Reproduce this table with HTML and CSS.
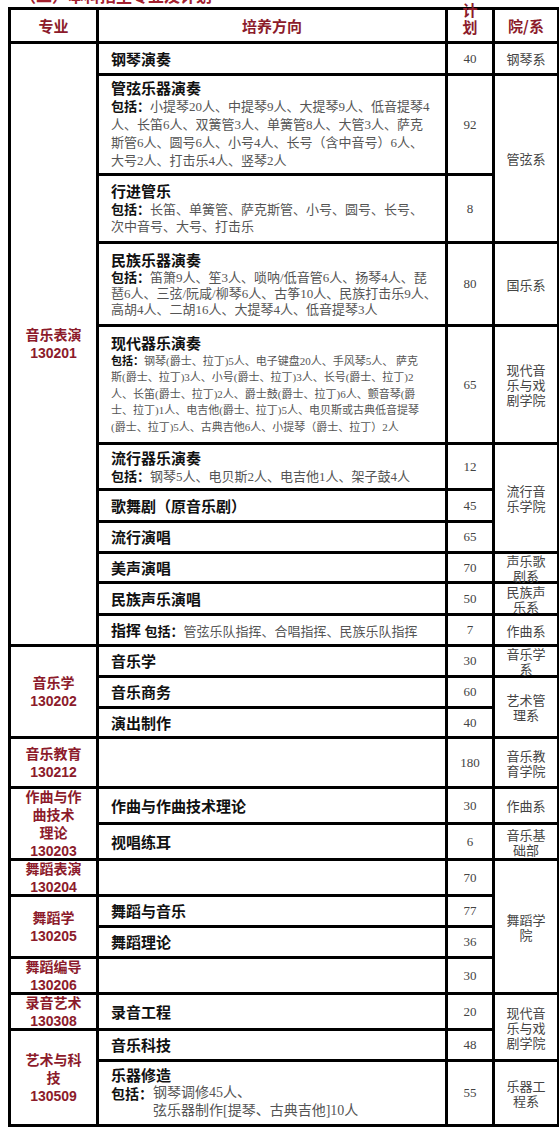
FILE: index.html
```html
<!DOCTYPE html>
<html lang="zh-CN">
<head>
<meta charset="utf-8">
<title>招生专业及计划</title>
<link rel="stylesheet" href="styles.css">
</head>
<body>
<div class="cut"><div class="cut-text">（二）本科招生专业及计划</div></div>
<table class="plan">
  <colgroup>
    <col class="c1"><col class="c2"><col class="c3"><col class="c4">
  </colgroup>
  <tr class="h34 head">
    <th>专业</th>
    <th>培养方向</th>
    <th><div class="jh">计<br>划</div></th>
    <th>院/系</th>
  </tr>
  <tr class="h32">
    <td class="major" rowspan="11"><div class="in">音乐表演<br>130201</div></td>
    <td class="dir"><div class="t">钢琴演奏</div></td>
    <td class="num">40</td>
    <td class="dept"><div class="in">钢琴系</div></td>
  </tr>
  <tr class="h100">
    <td class="dir"><div class="t">管弦乐器演奏</div>
      <div class="d d18"><b>包括：</b>小提琴20人、中提琴9人、大提琴9人、低音提琴4<br>人、长笛6人、双簧管3人、单簧管8人、大管3人、萨克<br>斯管6人、圆号6人、小号4人、长号（含中音号）6人、<br>大号2人、打击乐4人、竖琴2人</div></td>
    <td class="num">92</td>
    <td class="dept" rowspan="2"><div class="in">管弦系</div></td>
  </tr>
  <tr class="h68">
    <td class="dir"><div class="t">行进管乐</div>
      <div class="d"><b>包括：</b>长笛、单簧管、萨克斯管、小号、圆号、长号、<br>次中音号、大号、打击乐</div></td>
    <td class="num">8</td>
  </tr>
  <tr class="h83">
    <td class="dir"><div class="t">民族乐器演奏</div>
      <div class="d d16"><b>包括：</b>笛箫9人、笙3人、唢呐/低音管6人、扬琴4人、琵<br>琶6人、三弦/阮咸/柳琴6人、古筝10人、民族打击乐9人、<br>高胡4人、二胡16人、大提琴4人、低音提琴3人</div></td>
    <td class="num">80</td>
    <td class="dept"><div class="in">国乐系</div></td>
  </tr>
  <tr class="h118">
    <td class="dir"><div class="t">现代器乐演奏</div>
      <div class="d small"><b>包括：</b>钢琴(爵士、拉丁)5人、电子键盘20人、手风琴5人、 萨克<br>斯(爵士、拉丁)3人、小号(爵士、拉丁)3人、长号(爵士、拉丁)2<br>人、长笛(爵士、拉丁)2人、爵士鼓(爵士、拉丁)6人、颤音琴(爵<br>士、拉丁)1人、电吉他(爵士、拉丁)5人、电贝斯或古典低音提琴<br>(爵士、拉丁)5人、古典吉他6人、小提琴（爵士、拉丁）2人</div></td>
    <td class="num">65</td>
    <td class="dept"><div class="in">现代音乐与戏剧学院</div></td>
  </tr>
  <tr class="h46">
    <td class="dir"><div class="t">流行器乐演奏</div>
      <div class="d"><b>包括：</b>钢琴5人、电贝斯2人、电吉他1人、架子鼓4人</div></td>
    <td class="num">12</td>
    <td class="dept" rowspan="3"><div class="in">流行音乐学院</div></td>
  </tr>
  <tr class="h32">
    <td class="dir"><div class="t">歌舞剧（原音乐剧）</div></td>
    <td class="num">45</td>
  </tr>
  <tr class="h31">
    <td class="dir"><div class="t">流行演唱</div></td>
    <td class="num">65</td>
  </tr>
  <tr class="h30">
    <td class="dir"><div class="t">美声演唱</div></td>
    <td class="num">70</td>
    <td class="dept"><div class="in">声乐歌剧系</div></td>
  </tr>
  <tr class="h32">
    <td class="dir"><div class="t">民族声乐演唱</div></td>
    <td class="num">50</td>
    <td class="dept"><div class="in">民族声乐系</div></td>
  </tr>
  <tr class="h31">
    <td class="dir"><div class="t inline">指挥 <span class="d"><b>包括：</b>管弦乐队指挥、合唱指挥、民族乐队指挥</span></div></td>
    <td class="num">7</td>
    <td class="dept"><div class="in">作曲系</div></td>
  </tr>
  <tr class="h31">
    <td class="major" rowspan="3"><div class="in">音乐学<br>130202</div></td>
    <td class="dir"><div class="t">音乐学</div></td>
    <td class="num">30</td>
    <td class="dept"><div class="in">音乐学系</div></td>
  </tr>
  <tr class="h31">
    <td class="dir"><div class="t">音乐商务</div></td>
    <td class="num">60</td>
    <td class="dept" rowspan="2"><div class="in">艺术管理系</div></td>
  </tr>
  <tr class="h30">
    <td class="dir"><div class="t">演出制作</div></td>
    <td class="num">40</td>
  </tr>
  <tr class="h50">
    <td class="major"><div class="in">音乐教育<br>130212</div></td>
    <td class="dir"></td>
    <td class="num">180</td>
    <td class="dept"><div class="in">音乐教育学院</div></td>
  </tr>
  <tr class="h36">
    <td class="major" rowspan="2"><div class="in">作曲与作<br>曲技术<br>理论<br>130203</div></td>
    <td class="dir"><div class="t">作曲与作曲技术理论</div></td>
    <td class="num">30</td>
    <td class="dept"><div class="in">作曲系</div></td>
  </tr>
  <tr class="h36">
    <td class="dir"><div class="t">视唱练耳</div></td>
    <td class="num">6</td>
    <td class="dept"><div class="in">音乐基础部</div></td>
  </tr>
  <tr class="h36">
    <td class="major"><div class="in">舞蹈表演<br>130204</div></td>
    <td class="dir"></td>
    <td class="num">70</td>
    <td class="dept" rowspan="4"><div class="in">舞蹈学院</div></td>
  </tr>
  <tr class="h31">
    <td class="major" rowspan="2"><div class="in">舞蹈学<br>130205</div></td>
    <td class="dir"><div class="t">舞蹈与音乐</div></td>
    <td class="num">77</td>
  </tr>
  <tr class="h31">
    <td class="dir"><div class="t">舞蹈理论</div></td>
    <td class="num">36</td>
  </tr>
  <tr class="h36">
    <td class="major"><div class="in">舞蹈编导<br>130206</div></td>
    <td class="dir"></td>
    <td class="num">30</td>
  </tr>
  <tr class="h36">
    <td class="major"><div class="in">录音艺术<br>130308</div></td>
    <td class="dir"><div class="t">录音工程</div></td>
    <td class="num">20</td>
    <td class="dept" rowspan="2"><div class="in">现代音乐与戏剧学院</div></td>
  </tr>
  <tr class="h31">
    <td class="major" rowspan="2"><div class="in">艺术与科<br>技<br>130509</div></td>
    <td class="dir"><div class="t">音乐科技</div></td>
    <td class="num">48</td>
  </tr>
  <tr class="h65">
    <td class="dir"><div class="t">乐器修造</div>
      <div class="d d18 big indent"><b>包括：</b><span>钢琴调修45人、<br>弦乐器制作[提琴、古典吉他]10人</span></div></td>
    <td class="num">55</td>
    <td class="dept"><div class="in">乐器工程系</div></td>
  </tr>
</table>
</body>
</html>
```

FILE: styles.css
```css
html, body {
  margin: 0;
  padding: 0;
  background: #ffffff;
}

body {
  font-family: "Noto Sans CJK SC", "Noto Sans", sans-serif;
  color: #111;
}

.cut {
  height: 5px;
  overflow: hidden;
  padding-left: 20px;
}

.cut-text {
  margin-top: -13px;
  font: 700 16px/16px "Noto Sans CJK SC", sans-serif;
  color: #a3202e;
}

.plan {
  border-collapse: collapse;
  table-layout: fixed;
  width: 549px;
  margin: 2px 0 0 8px;
}

.c1 { width: 88px; }
.c2 { width: 349px; }
.c3 { width: 47px; }
.c4 { width: 65px; }

.plan th,
.plan td {
  border: 3px solid #000;
  padding: 0;
  vertical-align: middle;
}

.plan .head th {
  color: #8c1b2b;
  font: 700 15px/18px "Noto Sans CJK SC", sans-serif;
  text-align: center;
}

.jh {
  margin-top: -15px;
  line-height: 17px;
}

.h30 { height: 30px; }
.h31 { height: 31px; }
.h32 { height: 32px; }
.h34 { height: 34px; }
.h36 { height: 36px; }
.h46 { height: 46px; }
.h50 { height: 50px; }
.h65 { height: 65px; }
.h68 { height: 68px; }
.h83 { height: 83px; }
.h100 { height: 100px; }
.h118 { height: 118px; }

.plan .major {
  color: #8c1b2b;
  font: 700 14px/18px "Liberation Sans", "Noto Sans CJK SC", sans-serif;
  text-align: center;
  padding: 0 4px;
}

.in {
  margin: -3px 0;
}

.plan .dir {
  padding: 0 6px 0 12px;
}

.t {
  font: 700 15px/18px "Noto Sans CJK SC", sans-serif;
  color: #111;
  white-space: nowrap;
}

.t.inline .d {
  font-size: 13px;
  font-weight: 400;
}

.d {
  font: 400 13px/17px "Liberation Serif", "Noto Sans CJK SC", serif;
  color: #555;
  white-space: nowrap;
}

.d b {
  font-family: "Noto Sans CJK SC", sans-serif;
  font-weight: 700;
  color: #111;
}

.d16 { line-height: 16px; }
.d18 { line-height: 18px; }

.d.small {
  font-size: 11px;
  line-height: 16.5px;
}

.d.big {
  font-size: 14px;
}

.indent {
  display: flex;
  align-items: flex-start;
}

.indent b {
  font-size: 14px;
  flex: none;
}

.plan .num {
  text-align: center;
  font: 400 13px/16px "Liberation Serif", serif;
  color: #444;
}

.plan .dept {
  text-align: center;
  font: 400 13px/15px "Noto Sans CJK SC", serif;
  color: #444;
  padding: 0 7px;
}
```
